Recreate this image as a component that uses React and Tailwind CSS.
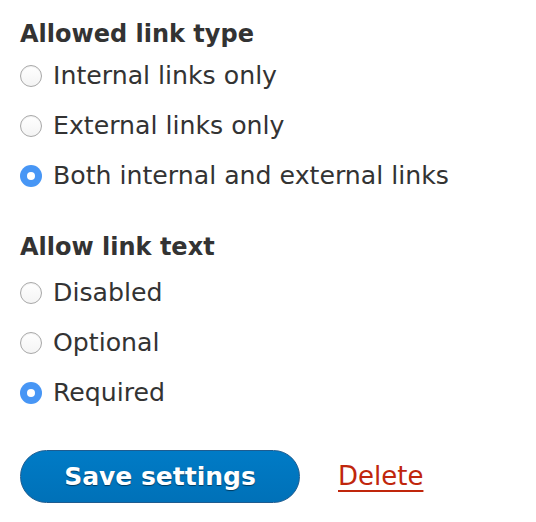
import React from "react";

function Radio({ checked }) {
  if (checked) {
    return (
      <span className="flex h-[22px] w-[22px] shrink-0 items-center justify-center rounded-full bg-[#4796f5]">
        <span className="h-[8px] w-[8px] rounded-full bg-white" />
      </span>
    );
  }
  return (
    <span className="h-[22px] w-[22px] shrink-0 rounded-full border border-[#a8a8a8] bg-gradient-to-b from-white to-[#f4f4f4] shadow-[inset_0_1px_1px_rgba(0,0,0,0.06)]" />
  );
}

function Option({ label, checked }) {
  return (
    <div className="flex h-[50px] items-center gap-[11px]">
      <Radio checked={checked} />
      <span className="text-[25.2px] text-[#333]">{label}</span>
    </div>
  );
}

export default function App() {
  return (
    <div
      className="min-h-[522px] w-[536px] bg-white pl-[20px] pt-[19px]"
      style={{ fontFamily: '"DejaVu Sans", "Liberation Sans", sans-serif' }}
    >
      <div className="h-[30px] text-[24px] font-bold leading-[30px] text-[#333]">
        Allowed link type
      </div>
      <div className="mt-[2px]">
        <Option label="Internal links only" />
        <Option label="External links only" />
        <Option label="Both internal and external links" checked />
      </div>
      <div className="mt-[31px] h-[30px] text-[24px] font-bold leading-[30px] text-[#333]">
        Allow link text
      </div>
      <div className="mt-[6px]">
        <Option label="Disabled" />
        <Option label="Optional" />
        <Option label="Required" checked />
      </div>
      <div className="mt-[32px] flex items-center gap-[38px]">
        <button className="flex h-[53px] w-[280px] items-center justify-center rounded-full border border-[#1e5c90] bg-gradient-to-b from-[#007bc6] to-[#0071b8] text-[25px] font-bold text-white [text-shadow:0_1px_1px_rgba(0,0,0,0.5)]">
          Save settings
        </button>
        <a href="#" className="text-[26px] text-[#c0260c] underline underline-offset-[5px]">
          Delete
        </a>
      </div>
    </div>
  );
}
